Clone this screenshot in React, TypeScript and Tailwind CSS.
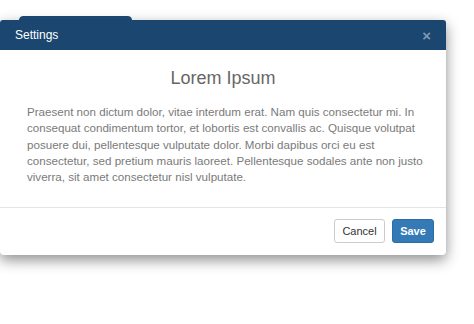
export default function App() {
  return (
    <div className="relative h-[324px] w-[474px] overflow-hidden bg-white font-[family-name:Liberation_Sans,Arial,sans-serif]">
      {/* tab peeking behind the modal */}
      <div className="absolute left-[19px] top-[16px] h-[8px] w-[113px] rounded-t-[4px] border border-[#1c4a75] bg-[#1e4d7a]" />

      {/* Modal */}
      <div className="absolute left-0 top-[20px] w-[446px] rounded-[4px] bg-white shadow-[0_5px_14px_rgba(0,0,0,0.45)]">
        <div className="flex h-[30px] items-center justify-between rounded-t-[3px] bg-[#1a4670] pl-[15px] pr-[15px]">
          <span className="text-[12px] text-white">Settings</span>
          <span className="text-[15px] font-bold leading-none text-[#7f98b1]">×</span>
        </div>

        <div className="pl-[27px] pr-[22px] pt-[17px]">
          <h2 className="pr-[5px] text-center text-[18px] leading-[22px] text-[#666666]">Lorem Ipsum</h2>
          <p className="mt-[15px] text-[11.6px] leading-[16.3px] text-[#7a7a7a]">
            Praesent non dictum dolor, vitae interdum erat. Nam quis consectetur mi. In consequat condimentum tortor, et lobortis est convallis ac. Quisque volutpat posuere dui, pellentesque vulputate dolor. Morbi dapibus orci eu est consectetur, sed pretium mauris laoreet. Pellentesque sodales ante non justo viverra, sit amet consectetur nisl vulputate.
          </p>
        </div>

        <div className="mt-[22px] flex justify-end gap-[7px] border-t border-[#e5e5e5] pb-[12px] pr-[12px] pt-[11px]">
          <button className="h-[24px] w-[51px] rounded-[3px] border border-[#cccccc] bg-white text-[11px] text-[#333333]">
            Cancel
          </button>
          <button className="h-[24px] w-[42px] rounded-[3px] border border-[#2e6da4] bg-[#337ab7] text-[11px] font-bold text-white">
            Save
          </button>
        </div>
      </div>
    </div>
  );
}
